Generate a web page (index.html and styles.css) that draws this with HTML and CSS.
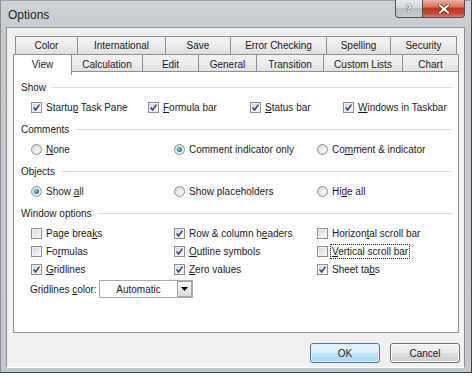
FILE: index.html
```html
<!DOCTYPE html>
<html>
<head>
<meta charset="utf-8">
<title>Options</title>
<link rel="stylesheet" href="styles.css">
</head>
<body>
<div class="window">
  <div class="titlebar">
    <span class="title">Options</span>
    <div class="caption-btns">
      <div class="cap help">?</div>
      <div class="cap close">
        <svg width="12" height="10" viewBox="0 0 12 10"><path d="M2 1.5 L10 8.5 M10 1.5 L2 8.5" stroke="#5a1d14" stroke-width="3.6" stroke-linecap="square"/><path d="M2 1.5 L10 8.5 M10 1.5 L2 8.5" stroke="#fff" stroke-width="2.2" stroke-linecap="square"/></svg>
      </div>
    </div>
  </div>
  <div class="client">
    <div class="tabctl">
      <div class="tabrow back">
        <div class="tab first">Color</div>
        <div class="tab">International</div>
        <div class="tab">Save</div>
        <div class="tab">Error Checking</div>
        <div class="tab">Spelling</div>
        <div class="tab">Security</div>
      </div>
      <div class="tabrow front">
        <div class="tab first selected">View</div>
        <div class="tab">Calculation</div>
        <div class="tab">Edit</div>
        <div class="tab">General</div>
        <div class="tab">Transition</div>
        <div class="tab">Custom Lists</div>
        <div class="tab">Chart</div>
      </div>
      <div class="page">
        <div class="group">
          <div class="heading"><span>Show</span><i class="rule"></i></div>
          <div class="row row-show">
            <div class="opt"><span class="cb"><svg class="chk" viewBox="0 0 9 9"><path d="M1.6 4.6 L3.6 7 L7.4 1.6"/></svg></span><span>Startu<u>p</u> Task Pane</span></div>
            <div class="opt"><span class="cb"><svg class="chk" viewBox="0 0 9 9"><path d="M1.6 4.6 L3.6 7 L7.4 1.6"/></svg></span><span><u>F</u>ormula bar</span></div>
            <div class="opt"><span class="cb"><svg class="chk" viewBox="0 0 9 9"><path d="M1.6 4.6 L3.6 7 L7.4 1.6"/></svg></span><span><u>S</u>tatus bar</span></div>
            <div class="opt"><span class="cb"><svg class="chk" viewBox="0 0 9 9"><path d="M1.6 4.6 L3.6 7 L7.4 1.6"/></svg></span><span><u>W</u>indows in Taskbar</span></div>
          </div>
        </div>
        <div class="group">
          <div class="heading"><span>Comments</span><i class="rule"></i></div>
          <div class="row row-3">
            <div class="opt"><span class="rb"></span><span><u>N</u>one</span></div>
            <div class="opt"><span class="rb on"></span><span>Comment indicator only</span></div>
            <div class="opt"><span class="rb"></span><span>Co<u>m</u>ment &amp; indicator</span></div>
          </div>
        </div>
        <div class="group">
          <div class="heading"><span>Objects</span><i class="rule"></i></div>
          <div class="row row-3">
            <div class="opt"><span class="rb on"></span><span>Show <u>a</u>ll</span></div>
            <div class="opt"><span class="rb"></span><span>Show placeholders</span></div>
            <div class="opt"><span class="rb"></span><span>Hi<u>d</u>e all</span></div>
          </div>
        </div>
        <div class="group">
          <div class="heading"><span>Window options</span><i class="rule"></i></div>
          <div class="row row-3">
            <div class="opt"><span class="cb"></span><span>Page brea<u>k</u>s</span></div>
            <div class="opt"><span class="cb"><svg class="chk" viewBox="0 0 9 9"><path d="M1.6 4.6 L3.6 7 L7.4 1.6"/></svg></span><span>Row &amp; column h<u>e</u>aders</span></div>
            <div class="opt"><span class="cb"></span><span>Horizon<u>t</u>al scroll bar</span></div>
          </div>
          <div class="row row-3 tight">
            <div class="opt"><span class="cb"></span><span>Fo<u>r</u>mulas</span></div>
            <div class="opt"><span class="cb"><svg class="chk" viewBox="0 0 9 9"><path d="M1.6 4.6 L3.6 7 L7.4 1.6"/></svg></span><span><u>O</u>utline symbols</span></div>
            <div class="opt"><span class="cb"></span><span class="focus"><u>V</u>ertical scroll bar</span></div>
          </div>
          <div class="row row-3 tight">
            <div class="opt"><span class="cb"><svg class="chk" viewBox="0 0 9 9"><path d="M1.6 4.6 L3.6 7 L7.4 1.6"/></svg></span><span><u>G</u>ridlines</span></div>
            <div class="opt"><span class="cb"><svg class="chk" viewBox="0 0 9 9"><path d="M1.6 4.6 L3.6 7 L7.4 1.6"/></svg></span><span><u>Z</u>ero values</span></div>
            <div class="opt"><span class="cb"><svg class="chk" viewBox="0 0 9 9"><path d="M1.6 4.6 L3.6 7 L7.4 1.6"/></svg></span><span>Sheet ta<u>b</u>s</span></div>
          </div>
          <div class="colorrow">
            <span class="colorlabel">Gridlines <u>c</u>olor:</span>
            <div class="combo">
              <span class="combo-text">Automatic</span>
              <span class="combo-btn"><svg width="7" height="4" viewBox="0 0 7 4"><path d="M0 0 H7 L3.5 4 Z" fill="#000"/></svg></span>
            </div>
          </div>
        </div>
      </div>
    </div>
    <div class="buttons">
      <div class="btn default">OK</div>
      <div class="btn">Cancel</div>
    </div>
  </div>
</div>
</body>
</html>
```
FILE: styles.css
```css
html, body {
  margin: 0;
  padding: 0;
  background: #ffffff;
}

body {
  font-family: "Liberation Sans", Arial, sans-serif;
  font-size: 10px;
  color: #1b1b1b;
}

.window {
  width: 472px;
  height: 373px;
  box-sizing: border-box;
  display: flex;
  flex-direction: column;
  padding: 0 6px 4px 5px;
  background: linear-gradient(to bottom, #cfd3d8 0, #c7cbd0 8%, #c3c8ce 100%);
  border-left: 1px solid #8a9098;
  border-right: 1px solid #3e434a;
  border-bottom: 1px solid #3e434a;
  border-top: 1px solid #9aa0a7;
}

.titlebar {
  height: 26px;
  flex: none;
  display: flex;
  justify-content: space-between;
  align-items: flex-start;
}

.title {
  font-size: 12px;
  color: #1e1e1e;
  margin: 7px 0 0 2px;
}

.caption-btns {
  display: flex;
  margin-top: -1px;
}

.cap {
  height: 18px;
  box-sizing: border-box;
  border: 1px solid #4d535b;
  border-top: none;
  display: flex;
  align-items: center;
  justify-content: center;
}

.help {
  width: 27px;
  border-right: none;
  border-bottom-left-radius: 4px;
  background: linear-gradient(to bottom, #e6e9ec 0, #d3d7db 45%, #b9bec4 50%, #c6cbd0 100%);
  color: #f4f5f6;
  font-family: "DejaVu Sans", sans-serif;
  font-weight: bold;
  font-size: 11px;
  text-shadow: 0 0 1px #3a3f46, 0 0 1px #3a3f46;
}

.close {
  width: 43px;
  border-bottom-right-radius: 4px;
  background: linear-gradient(to bottom, #eab1a3 0, #d9735f 40%, #c5341f 50%, #c94a34 80%, #d9826d 100%);
}

.client {
  flex: 1;
  box-sizing: border-box;
  background: #f0f0f0;
  border: 1px solid #8b9199;
  border-bottom-color: #ffffff;
  padding: 8px 5px 0 6px;
  display: flex;
  flex-direction: column;
}

.tabctl {
  display: flex;
  flex-direction: column;
}

.tabrow {
  display: grid;
  height: 18px;
}

.tabrow.back {
  margin: 0 2px;
  grid-template-columns: 63px 88px 65px 96px 64px 1fr;
}

.tabrow.front {
  height: 17px;
  grid-template-columns: 59px 71px 56px 58px 67px 79px 1fr;
  align-items: end;
}

.tab {
  box-sizing: border-box;
  height: 100%;
  border-top: 1px solid #8c8f96;
  border-right: 1px solid #8c8f96;
  background: linear-gradient(to bottom, #f4f4f4 0, #ebebeb 50%, #dedede 100%);
  display: flex;
  align-items: center;
  justify-content: center;
  color: #1b1b1b;
  white-space: nowrap;
}

.tab.first {
  border-left: 1px solid #8c8f96;
}

.tab.selected {
  height: 21px;
  margin-bottom: -1px;
  background: #ffffff;
  position: relative;
  z-index: 1;
  padding-bottom: 2px;
}

.page {
  box-sizing: border-box;
  height: 262px;
  background: #ffffff;
  border: 1px solid #8c8f96;
  padding: 7px 6px 0 7px;
}

.group + .group {
  margin-top: 5px;
}

.heading {
  height: 16px;
  display: flex;
  align-items: center;
}

.rule {
  flex: 1;
  height: 1px;
  background: #d9dee3;
  margin-left: 6px;
}

.row {
  display: grid;
  height: 18px;
  margin: 3px 0 0 10px;
  align-items: center;
}

.row.tight {
  margin-top: 0;
}

.row-show {
  grid-template-columns: 117px 102px 93px 1fr;
}

.row-3 {
  grid-template-columns: 143px 143px 1fr;
}

.opt {
  display: flex;
  align-items: center;
  gap: 4px;
  white-space: nowrap;
}

.cb {
  width: 11px;
  height: 11px;
  box-sizing: border-box;
  flex: none;
  border: 1px solid #8f8f8f;
  background: linear-gradient(135deg, #cdd1d6 0, #e6e8eb 50%, #f8f8f8 100%);
  box-shadow: inset 0 0 0 1px #f2f2f2;
  display: flex;
  align-items: center;
  justify-content: center;
}

.chk {
  width: 9px;
  height: 9px;
}

.chk path {
  fill: none;
  stroke: #2f4479;
  stroke-width: 1.5;
}

.rb {
  width: 11px;
  height: 11px;
  box-sizing: border-box;
  flex: none;
  border-radius: 50%;
  border: 1px solid #8f9296;
  background: radial-gradient(circle at 65% 65%, #f8f8f8 0, #e2e4e6 55%, #c9ccd0 100%);
  display: flex;
  align-items: center;
  justify-content: center;
}

.rb.on::after {
  content: "";
  width: 5px;
  height: 5px;
  border-radius: 50%;
  background: radial-gradient(circle at 40% 40%, #8fdcf7 0, #2b8dbd 45%, #0f4f74 100%);
}

.focus {
  outline: 1px dotted #222;
  outline-offset: 1px;
}

.colorrow {
  display: flex;
  align-items: center;
  height: 18px;
  margin: 2px 0 0 9px;
}

.colorlabel {
  width: 69px;
  flex: none;
}

.combo {
  box-sizing: border-box;
  width: 94px;
  height: 18px;
  border: 1px solid #a9abb0;
  background: #ffffff;
  display: flex;
  align-items: stretch;
}

.combo-text {
  flex: 1;
  display: flex;
  align-items: center;
  justify-content: center;
}

.combo-btn {
  width: 15px;
  box-sizing: border-box;
  border: 1px solid #a5a8ad;
  background: linear-gradient(to bottom, #f6f6f6, #dcdcdc);
  display: flex;
  align-items: center;
  justify-content: center;
}

.buttons {
  display: flex;
  justify-content: flex-end;
  gap: 10px;
  margin-top: 10px;
  margin-right: -1px;
}

.btn {
  width: 70px;
  height: 20px;
  box-sizing: border-box;
  border: 1px solid #707070;
  border-radius: 3px;
  background: linear-gradient(to bottom, #f2f2f2 0, #ebebeb 48%, #dddddd 52%, #cfcfcf 100%);
  box-shadow: inset 0 0 0 1px #fcfcfc;
  display: flex;
  align-items: center;
  justify-content: center;
  color: #1b1b1b;
}

.btn.default {
  border-color: #3c7fb1;
  background: linear-gradient(to bottom, #eaf6fd 0, #d9f0fc 48%, #bee6fd 52%, #a7d9f5 100%);
  box-shadow: inset 0 0 0 1px #dff2fc;
}
```
